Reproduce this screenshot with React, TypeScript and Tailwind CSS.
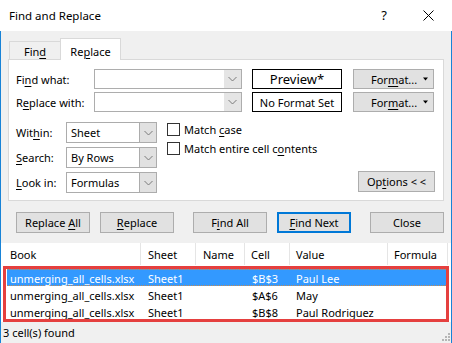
import React from "react";

const U = ({ children }: { children: React.ReactNode }) => (
  <span className="underline decoration-1 underline-offset-[2px]">{children}</span>
);

const Chevron = () => (
  <svg width="9" height="6" viewBox="0 0 9 6">
    <path d="M0.5 1 L4.5 5 L8.5 1" stroke="#7a7a7a" fill="none" strokeWidth="1" />
  </svg>
);

const Combo = () => (
  <div className="flex w-[148px] h-[20px] border border-[#adadad] bg-white">
    <div className="flex-1" />
    <div className="w-[17px] bg-[#e5e5e5] flex items-center justify-center">
      <Chevron />
    </div>
  </div>
);

const Select = ({ value }: { value: string }) => (
  <div className="flex w-[91px] h-[21px] border border-[#acacac] bg-white">
    <div className="flex-1 flex items-center pl-[4px]">{value}</div>
    <div className="w-[17px] bg-[#e1e1e1] border-l border-[#acacac] flex items-center justify-center">
      <Chevron />
    </div>
  </div>
);

const FormatBtn = () => (
  <div className="ml-[11px] w-[81px] h-[20px] border border-[#adadad] bg-[#e1e1e1] flex items-center">
    <span className="ml-[17px]">
      For<U>m</U>at...
    </span>
    <svg width="6" height="4" viewBox="0 0 6 4" className="ml-auto mr-[4px]">
      <path d="M0 0.5 H5 L2.5 3.5 Z" fill="#000" />
    </svg>
  </div>
);

const Checkbox = ({ children }: { children: React.ReactNode }) => (
  <div className="flex items-center h-[13px]">
    <div className="w-[13px] h-[13px] border border-[#333333] bg-white" />
    <span className="ml-[4px]">{children}</span>
  </div>
);

const Btn = ({
  children,
  cls,
  focus,
}: {
  children: React.ReactNode;
  cls?: string;
  focus?: boolean;
}) => (
  <div
    className={
      "w-[74px] h-[21px] bg-[#e1e1e1] flex items-center justify-center " +
      (focus ? "border-2 border-[#0078d7] " : "border border-[#adadad] ") +
      (cls ?? "")
    }
  >
    <span>{children}</span>
  </div>
);

const rows = [
  { book: "unmerging_all_cells.xlsx", sheet: "Sheet1", cell: "$B$3", value: "Paul Lee" },
  { book: "unmerging_all_cells.xlsx", sheet: "Sheet1", cell: "$A$6", value: "May" },
  { book: "unmerging_all_cells.xlsx", sheet: "Sheet1", cell: "$B$8", value: "Paul Rodriguez" },
];

export default function App() {
  return (
    <div className="w-[452px] h-[343px] flex flex-col bg-[#f0f0f0] text-[11px] text-black overflow-hidden font-['Noto_Sans',sans-serif] leading-none">
      {/* title bar */}
      <div className="h-[31px] bg-white flex items-center shrink-0">
        <span className="ml-[9px] text-[11.5px]">Find and Replace</span>
        <span className="ml-auto text-[13px] mr-[36px]">?</span>
        <svg width="11" height="11" viewBox="0 0 11 11" className="mr-[18px]">
          <path d="M0.5 0.5 L10.5 10.5 M10.5 0.5 L0.5 10.5" stroke="#000" strokeWidth="1" />
        </svg>
      </div>

      <div className="flex-1 flex flex-col border-x border-[#1883d7]">
        {/* tabs */}
        <div className="flex items-end h-[28px] pl-[8px] shrink-0">
          <div className="w-[51px] h-[18px] border-l border-t border-[#d9d9d9] bg-[#f0f0f0] flex items-center justify-center pt-[1px]">
            <span>
              Fin<U>d</U>
            </span>
          </div>
          <div className="relative z-10 -mb-px w-[61px] h-[22px] border-l border-t border-r border-[#d9d9d9] bg-white flex items-center justify-center pt-[3px]">
            <span>
              Re<U>p</U>lace
            </span>
          </div>
        </div>

        {/* panel */}
        <div className="ml-[7px] w-[436px] h-[142px] bg-white border border-[#d9d9d9] pl-[7px] pt-[9px] shrink-0">
          <div className="flex items-center h-[20px]">
            <div className="w-[78px]">
              Fi<U>n</U>d what:
            </div>
            <Combo />
            <div className="ml-[10px] w-[90px] h-[20px] border border-black flex items-center justify-center text-[13px]">
              Preview*
            </div>
            <FormatBtn />
          </div>
          <div className="flex items-center h-[20px] mt-[3px]">
            <div className="w-[78px]">
              R<U>e</U>place with:
            </div>
            <Combo />
            <div className="ml-[10px] w-[90px] h-[20px] border border-black flex items-center justify-center">
              No Format Set
            </div>
            <FormatBtn />
          </div>

          <div className="flex mt-[10px]">
            <div className="flex flex-col gap-[4px]">
              <div className="flex items-center h-[21px]">
                <div className="w-[50px]">
                  Wit<U>h</U>in:
                </div>
                <Select value="Sheet" />
              </div>
              <div className="flex items-center h-[21px]">
                <div className="w-[50px]">
                  <U>S</U>earch:
                </div>
                <Select value="By Rows" />
              </div>
              <div className="flex items-center h-[21px]">
                <div className="w-[50px]">
                  <U>L</U>ook in:
                </div>
                <Select value="Formulas" />
              </div>
            </div>
            <div className="ml-[10px] mt-[1px] flex flex-col gap-[6px]">
              <Checkbox>
                Match <U>c</U>ase
              </Checkbox>
              <Checkbox>
                Match entire cell c<U>o</U>ntents
              </Checkbox>
            </div>
            <div className="ml-auto mr-[8px] self-end mb-[1px] w-[77px] h-[21px] border border-[#adadad] bg-[#e1e1e1] flex items-center justify-center">
              <span>
                Op<U>t</U>ions &lt; &lt;
              </span>
            </div>
          </div>
        </div>

        {/* buttons */}
        <div className="flex mt-[11px] pl-[15px] shrink-0">
          <Btn>
            Replace <U>A</U>ll
          </Btn>
          <Btn cls="ml-[10px]">
            <U>R</U>eplace
          </Btn>
          <Btn cls="ml-[19px]">
            F<U>i</U>nd All
          </Btn>
          <Btn cls="ml-[10px]" focus>
            <U>F</U>ind Next
          </Btn>
          <Btn cls="ml-[19px]">Close</Btn>
        </div>

        {/* results */}
        <div className="mt-[10px] h-[79px] bg-white shrink-0 flex flex-col">
          <div className="flex h-[22px] shrink-0">
            <div className="w-[140px] border-r border-[#e5e5e5] flex items-center pl-[9px]">Book</div>
            <div className="w-[55px] border-r border-[#e5e5e5] flex items-center pl-[7px]">Sheet</div>
            <div className="w-[49px] border-r border-[#e5e5e5] flex items-center pl-[7px]">Name</div>
            <div className="w-[45px] border-r border-[#e5e5e5] flex items-center pl-[6px]">Cell</div>
            <div className="w-[98px] border-r border-[#e5e5e5] flex items-center pl-[6px]">Value</div>
            <div className="w-[60px] border-r border-[#e5e5e5] flex items-center pl-[6px]">Formula</div>
          </div>
          <div className="mt-[1px] ml-[2px] w-[446px] h-[56px] border-[3px] border-[#e5403f] overflow-hidden">
            {rows.map((r, i) => (
              <div
                key={i}
                className={
                  "flex h-[17px] ml-[1px] items-center pt-[1px] " +
                  (i === 0
                    ? "bg-[#3399ff] text-white border-y border-dotted border-[#c48a52]"
                    : "")
                }
              >
                <div className="w-[134px] pl-[3px]">{r.book}</div>
                <div className="w-[55px] pl-[7px]">{r.sheet}</div>
                <div className="w-[49px]" />
                <div className="w-[45px] pl-[7px]">{r.cell}</div>
                <div className="pl-[6px]">{r.value}</div>
              </div>
            ))}
          </div>
        </div>

        {/* status bar */}
        <div className="flex-1 relative flex items-center pl-[2px]">
          <span>3 cell(s) found</span>
          <svg width="8" height="8" viewBox="0 0 8 8" className="absolute right-[1px] bottom-[2px]">
            <rect x="6" y="0" width="2" height="2" fill="#b5b5b5" />
            <rect x="3" y="3" width="2" height="2" fill="#b5b5b5" />
            <rect x="6" y="3" width="2" height="2" fill="#b5b5b5" />
            <rect x="0" y="6" width="2" height="2" fill="#b5b5b5" />
            <rect x="3" y="6" width="2" height="2" fill="#b5b5b5" />
            <rect x="6" y="6" width="2" height="2" fill="#b5b5b5" />
          </svg>
        </div>
      </div>
    </div>
  );
}
